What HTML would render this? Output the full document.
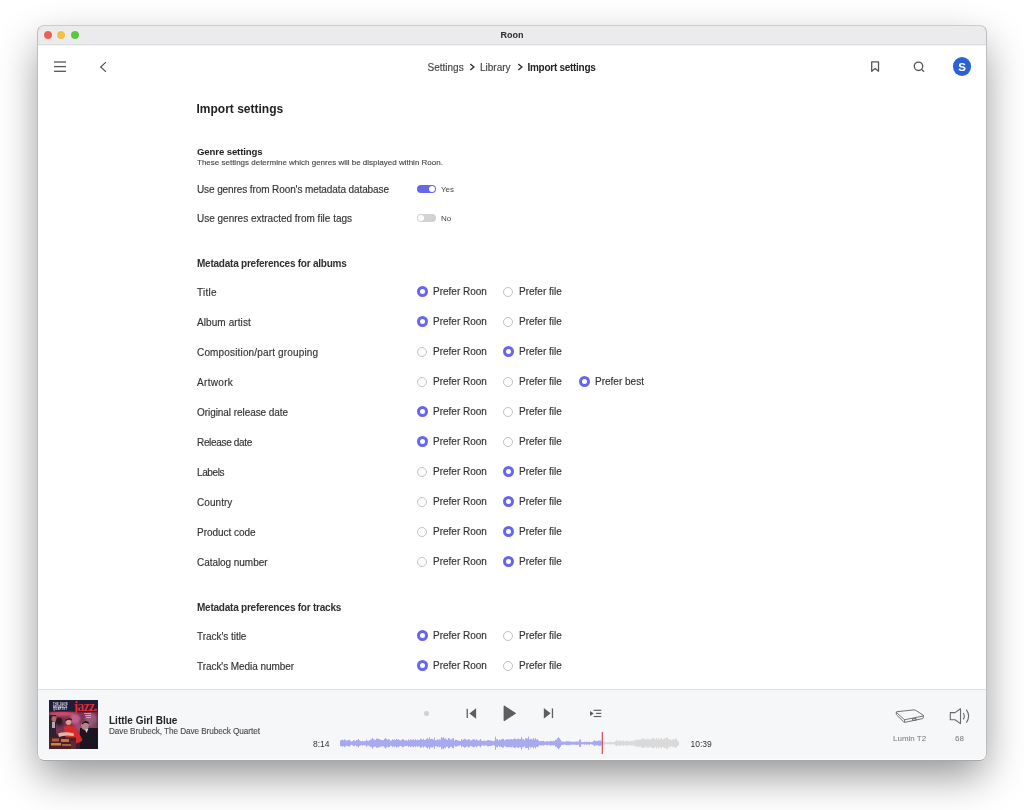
<!DOCTYPE html>
<html><head><meta charset="utf-8">
<style>
html,body{margin:0;padding:0;width:1024px;height:810px;background:#fff;overflow:hidden;position:relative;font-family:"Liberation Sans",sans-serif;color:#333;}
#root{position:absolute;left:0;top:0;width:1024px;height:810px;will-change:transform;}
.abs{position:absolute;white-space:nowrap;}
#win{position:absolute;left:37px;top:25px;width:950px;height:736px;border-radius:7px;background:#fff;box-shadow:0 17px 42px -3px rgba(0,0,0,0.44);}
#frame{position:absolute;left:37px;top:25px;width:950px;height:736px;border-radius:7px;border:1px solid #bdbdbd;border-top-color:#cdcdcd;border-bottom-color:#a9a9a9;box-sizing:border-box;z-index:5;pointer-events:none;}
#titlebar{position:absolute;left:37px;top:25px;width:950px;height:20px;background:#ebebed;border-bottom:1px solid #dedede;border-radius:7px 7px 0 0;box-sizing:border-box;box-shadow:0 1px 0 #f3f3f3;}
.tl{position:absolute;top:31.3px;width:8px;height:8px;border-radius:50%;box-shadow:0 0 0 0.6px rgba(255,255,255,0.7);}
#footer{position:absolute;left:37px;top:689px;width:950px;height:72px;background:#f6f7f8;border-top:1px solid #e2e2e2;border-radius:0 0 7px 7px;box-sizing:border-box;box-shadow:inset 0 -2px 0 #fdfdfd;}
.lbl{position:absolute;left:197px;font-size:10px;color:#333;white-space:nowrap;line-height:12px;-webkit-text-stroke:0.15px #333;}
.sec{position:absolute;left:197px;font-size:10px;font-weight:700;color:#2e2e2e;white-space:nowrap;line-height:12px;letter-spacing:-0.2px;}
.r{position:absolute;width:8px;height:8px;border-radius:50%;border:1.2px solid #c2c2c2;margin:1px 0 0 0.2px;}
.r.on{border:3px solid #6666ea;width:5px;height:5px;background:#fff;margin:0;}
.rt{position:absolute;font-size:10px;color:#333;white-space:nowrap;line-height:12px;-webkit-text-stroke:0.15px #333;}
</style></head>
<body>
<div id="root">
<div id="win"></div>
<div id="titlebar"></div>
<div class="tl" style="left:44px;background:#ec5f57;"></div>
<div class="tl" style="left:57px;background:#f4bd45;"></div>
<div class="tl" style="left:71px;background:#5bc544;"></div>
<div class="abs" style="left:38px;width:948px;text-align:center;top:30px;font-size:9px;font-weight:700;color:#2a2a2a;line-height:11px;">Roon</div>

<!-- header icons -->
<svg class="abs" style="left:50px;top:57px" width="20" height="20" viewBox="0 0 20 20">
  <g stroke="#555" stroke-width="1.3"><line x1="4" y1="5" x2="16" y2="5"/><line x1="4" y1="9.6" x2="16" y2="9.6"/><line x1="4" y1="14.3" x2="16" y2="14.3"/></g>
</svg>
<svg class="abs" style="left:93px;top:57px" width="20" height="20" viewBox="0 0 20 20">
  <polyline points="13,5.2 7.6,10 13,14.8" fill="none" stroke="#4a4a4a" stroke-width="1.1"/>
</svg>
<div class="abs" style="left:427.5px;top:62px;font-size:10px;line-height:12px;color:#444;-webkit-text-stroke:0.15px #444;">Settings</div>
<svg class="abs" style="left:466px;top:62px" width="12" height="10" viewBox="0 0 12 10"><polyline points="4.3,2 7.9,5 4.3,8" fill="none" stroke="#333" stroke-width="1.4"/></svg>
<div class="abs" style="left:480px;top:62px;font-size:10px;line-height:12px;color:#444;-webkit-text-stroke:0.15px #444;">Library</div>
<svg class="abs" style="left:514px;top:62px" width="12" height="10" viewBox="0 0 12 10"><polyline points="4.3,2 7.9,5 4.3,8" fill="none" stroke="#333" stroke-width="1.4"/></svg>
<div class="abs" style="left:527.5px;top:62px;font-size:10px;line-height:12px;color:#222;font-weight:700;letter-spacing:-0.28px;">Import settings</div>

<svg class="abs" style="left:865px;top:57px" width="20" height="20" viewBox="0 0 20 20">
  <path d="M6.7 4.9 H13.5 V14.2 L10.1 11.5 L6.7 14.2 Z" fill="none" stroke="#555" stroke-width="1.3" stroke-linejoin="round"/>
</svg>
<svg class="abs" style="left:908.5px;top:57px" width="20" height="20" viewBox="0 0 20 20">
  <circle cx="9.5" cy="9.3" r="4.2" fill="none" stroke="#555" stroke-width="1.3"/><line x1="12.6" y1="12.4" x2="15" y2="14.8" stroke="#555" stroke-width="1.3"/>
</svg>
<div class="abs" style="left:952.9px;top:57.2px;width:18.6px;height:18.6px;border-radius:50%;background:#2c62d6;"></div>
<div class="abs" style="left:952.9px;top:58.4px;width:18.6px;text-align:center;color:#fff;font-size:11.5px;line-height:18.6px;font-weight:700;">S</div>

<div class="abs" style="left:196.5px;top:102px;font-size:12px;font-weight:700;color:#222;line-height:14px;">Import settings</div>

<div class="abs" style="left:197px;top:145.6px;font-size:9.6px;font-weight:700;color:#222;line-height:11px;letter-spacing:-0.12px;">Genre settings</div>
<div class="abs" style="left:197px;top:157.5px;font-size:8px;color:#444;line-height:9px;-webkit-text-stroke:0.12px #444;">These settings determine which genres will be displayed within Roon.</div>

<div class="lbl" style="top:184px;letter-spacing:-0.1px">Use genres from Roon's metadata database</div>
<div class="abs" style="left:417px;top:185px;width:19px;height:8px;border-radius:4px;background:#6666ea;"></div>
<div class="abs" style="left:428.5px;top:186px;width:6px;height:6px;border-radius:50%;background:#fff;"></div>
<div class="abs" style="left:441px;top:185px;font-size:8px;line-height:10px;color:#444;">Yes</div>

<div class="lbl" style="top:213px">Use genres extracted from file tags</div>
<div class="abs" style="left:417px;top:214px;width:19px;height:8px;border-radius:4px;background:#d2d2d2;"></div>
<div class="abs" style="left:418px;top:215px;width:6px;height:6px;border-radius:50%;background:#fff;"></div>
<div class="abs" style="left:441px;top:214px;font-size:8px;line-height:10px;color:#444;">No</div>

<div class="sec" style="top:258px;letter-spacing:-0.23px">Metadata preferences for albums</div>
<div class="sec" style="top:602px;letter-spacing:-0.23px">Metadata preferences for tracks</div>

<div class="lbl" style="top:287px;letter-spacing:0.25px">Title</div>
<div class="r on" style="left:416.5px;top:286px"></div>
<div class="rt" style="left:433px;top:286px">Prefer Roon</div>
<div class="r" style="left:502.5px;top:286px"></div>
<div class="rt" style="left:519px;top:286px">Prefer file</div>
<div class="lbl" style="top:317px;letter-spacing:0.09px">Album artist</div>
<div class="r on" style="left:416.5px;top:316px"></div>
<div class="rt" style="left:433px;top:316px">Prefer Roon</div>
<div class="r" style="left:502.5px;top:316px"></div>
<div class="rt" style="left:519px;top:316px">Prefer file</div>
<div class="lbl" style="top:347px;letter-spacing:0.16px">Composition/part grouping</div>
<div class="r" style="left:416.5px;top:346px"></div>
<div class="rt" style="left:433px;top:346px">Prefer Roon</div>
<div class="r on" style="left:502.5px;top:346px"></div>
<div class="rt" style="left:519px;top:346px">Prefer file</div>
<div class="lbl" style="top:377px;letter-spacing:0.33px">Artwork</div>
<div class="r" style="left:416.5px;top:376px"></div>
<div class="rt" style="left:433px;top:376px">Prefer Roon</div>
<div class="r" style="left:502.5px;top:376px"></div>
<div class="rt" style="left:519px;top:376px">Prefer file</div>
<div class="r on" style="left:578.5px;top:376px"></div>
<div class="rt" style="left:595px;top:376px">Prefer best</div>
<div class="lbl" style="top:407px;letter-spacing:-0.06px">Original release date</div>
<div class="r on" style="left:416.5px;top:406px"></div>
<div class="rt" style="left:433px;top:406px">Prefer Roon</div>
<div class="r" style="left:502.5px;top:406px"></div>
<div class="rt" style="left:519px;top:406px">Prefer file</div>
<div class="lbl" style="top:437px;letter-spacing:-0.33px">Release date</div>
<div class="r on" style="left:416.5px;top:436px"></div>
<div class="rt" style="left:433px;top:436px">Prefer Roon</div>
<div class="r" style="left:502.5px;top:436px"></div>
<div class="rt" style="left:519px;top:436px">Prefer file</div>
<div class="lbl" style="top:467px;letter-spacing:-0.4px">Labels</div>
<div class="r" style="left:416.5px;top:466px"></div>
<div class="rt" style="left:433px;top:466px">Prefer Roon</div>
<div class="r on" style="left:502.5px;top:466px"></div>
<div class="rt" style="left:519px;top:466px">Prefer file</div>
<div class="lbl" style="top:497px;letter-spacing:0.06px">Country</div>
<div class="r" style="left:416.5px;top:496px"></div>
<div class="rt" style="left:433px;top:496px">Prefer Roon</div>
<div class="r on" style="left:502.5px;top:496px"></div>
<div class="rt" style="left:519px;top:496px">Prefer file</div>
<div class="lbl" style="top:527px;letter-spacing:-0.03px">Product code</div>
<div class="r" style="left:416.5px;top:526px"></div>
<div class="rt" style="left:433px;top:526px">Prefer Roon</div>
<div class="r on" style="left:502.5px;top:526px"></div>
<div class="rt" style="left:519px;top:526px">Prefer file</div>
<div class="lbl" style="top:557px;letter-spacing:-0.05px">Catalog number</div>
<div class="r" style="left:416.5px;top:556px"></div>
<div class="rt" style="left:433px;top:556px">Prefer Roon</div>
<div class="r on" style="left:502.5px;top:556px"></div>
<div class="rt" style="left:519px;top:556px">Prefer file</div>
<div class="lbl" style="top:631px;letter-spacing:-0.04px">Track's title</div>
<div class="r on" style="left:416.5px;top:630px"></div>
<div class="rt" style="left:433px;top:630px">Prefer Roon</div>
<div class="r" style="left:502.5px;top:630px"></div>
<div class="rt" style="left:519px;top:630px">Prefer file</div>
<div class="lbl" style="top:661px;letter-spacing:-0.06px">Track's Media number</div>
<div class="r on" style="left:416.5px;top:660px"></div>
<div class="rt" style="left:433px;top:660px">Prefer Roon</div>
<div class="r" style="left:502.5px;top:660px"></div>
<div class="rt" style="left:519px;top:660px">Prefer file</div>

<div id="footer"></div>
<svg class="abs" style="left:49px;top:700px" width="49" height="49" viewBox="0 0 49 49">
  <defs><filter id="bl" x="-20%" y="-20%" width="140%" height="140%"><feGaussianBlur stdDeviation="0.9"/></filter>
  <filter id="bl2" x="-20%" y="-20%" width="140%" height="140%"><feGaussianBlur stdDeviation="0.35"/></filter>
  <clipPath id="cp"><rect x="0" y="0" width="49" height="49"/></clipPath></defs>
  <g clip-path="url(#cp)">
  <rect x="0" y="0" width="49" height="49" fill="#3a1e30"/>
  <g filter="url(#bl)">
    <rect x="0" y="12" width="49" height="22" fill="#7a3454"/>
    <ellipse cx="13" cy="13.5" rx="13" ry="2.5" fill="#d84868"/>
    <ellipse cx="26" cy="19" rx="5" ry="5" fill="#c06090"/>
    <ellipse cx="42" cy="20" rx="6" ry="7" fill="#9a5a7a"/>
    <ellipse cx="29" cy="27" rx="4" ry="4" fill="#a04a78"/>
    <ellipse cx="11" cy="23" rx="4" ry="4" fill="#4a2838"/>
    <ellipse cx="46" cy="30" rx="3" ry="8" fill="#7a4a5a"/>
  </g>
  <g filter="url(#bl2)">
    <rect x="0" y="15" width="7" height="32" fill="#2e2030"/>
    <ellipse cx="5" cy="19" rx="2.5" ry="3" fill="#9a7068"/>
    <rect x="3" y="22" width="3" height="6" fill="#b8a8b0"/>
    <ellipse cx="10" cy="21" rx="3" ry="3.5" fill="#2a1a20"/>
    <rect x="31" y="28" width="18" height="21" fill="#1c1620"/>
    <ellipse cx="36" cy="25.5" rx="3.8" ry="4.5" fill="#b08488"/>
    <path d="M33 23 Q36 19.5 40 22.5 L39.5 24 Q36 21.5 33 24.5 Z" fill="#1a1418"/>
    <path d="M36 29.5 L39.5 28.5 L37.5 33 Z" fill="#e0d8d8"/>
    <path d="M15 27 Q21 24.5 27 27.5 L33.5 40 Q30 44.5 22 43 L16 36 Z" fill="#d82a2a"/>
    <ellipse cx="19.5" cy="21.5" rx="2.8" ry="3.4" fill="#dca090"/>
    <path d="M16 20 Q19 16.5 23 19 L22.5 21 Q19.5 18.5 16.5 21.5 Z" fill="#3a1a1a"/>
    <path d="M9 33.5 Q16 31 25 33.5 L24.5 36 Q15.5 34.5 10 37 Z" fill="#e4b8a8"/>
    <rect x="0" y="37.5" width="27" height="11.5" fill="#4a2420"/>
    <rect x="3" y="38.5" width="7" height="3" fill="#b85838"/>
    <rect x="12" y="39" width="8" height="3" fill="#c87048"/>
    <rect x="2" y="43" width="10" height="2.5" fill="#d08050"/>
    <rect x="13" y="44" width="9" height="2" fill="#a86040"/>
    <rect x="22" y="41" width="5" height="8" fill="#5a2a38"/>
  </g>
  <rect x="0" y="0" width="49" height="11.5" fill="#1e1c38"/>
  <g font-family="Liberation Sans" font-weight="700" font-size="2.6" fill="#dcdce4" letter-spacing="0.25"><text x="4" y="5">THE DAVE</text><text x="4" y="7.7">BRUBECK</text><text x="4" y="10.4">QUARTET</text></g>
  <g filter="url(#bl2)"><text x="24.8" y="11" font-family="Liberation Serif" font-size="14" font-weight="700" fill="#e42c30" letter-spacing="-0.9">jazz.</text></g>
  <g fill="#d8d0d8" opacity="0.7"><rect x="35" y="13" width="7" height="1"/><rect x="36" y="15" width="6" height="1"/><rect x="37" y="17" width="5" height="1"/></g>
  </g>
</svg>

<div class="abs" style="left:109px;top:715px;font-size:10px;font-weight:700;color:#222;line-height:12px;">Little Girl Blue</div>
<div class="abs" style="left:109px;top:726.9px;font-size:8.2px;letter-spacing:-0.06px;color:#4a4a4a;line-height:10px;-webkit-text-stroke:0.12px #4a4a4a;">Dave Brubeck, The Dave Brubeck Quartet</div>

<!-- controls -->
<div class="abs" style="left:423.8px;top:710.7px;width:5px;height:5px;border-radius:50%;background:#d0d0d0;"></div>
<svg class="abs" style="left:0;top:0" width="1024" height="810" viewBox="0 0 1024 810">
  <g fill="#5e5e5e">
    <rect x="466.6" y="708.8" width="1.3" height="9.2"/>
    <path d="M469.4 713.45 L476.1 708.2 V718.7 Z"/>
    <path d="M504 705.8 V720.9 L515.7 713.35 Z" stroke="#5e5e5e" stroke-width="0.8" stroke-linejoin="round"/>
    <path d="M543.8 707.9 V718.8 L550.6 713.35 Z"/>
    <rect x="551.8" y="708.5" width="1.3" height="9.6"/>
    <path d="M590 710.9 V716 L593.8 713.45 Z"/>
  </g>
  <g stroke="#5e5e5e" stroke-width="1.15">
    <line x1="593.6" y1="710.3" x2="601.3" y2="710.3"/>
    <line x1="596" y1="713.4" x2="601.3" y2="713.4"/>
    <line x1="593.6" y1="716.5" x2="601.3" y2="716.5"/>
  </g>
</svg>
<div class="abs" style="left:313px;top:739px;font-size:8.5px;color:#333;line-height:10px;">8:14</div>
<div class="abs" style="left:690.5px;top:739px;font-size:8.5px;color:#333;line-height:10px;">10:39</div>
<svg class="abs" style="left:0;top:0" width="1024" height="810" viewBox="0 0 1024 810"><g fill="#a9a9f2"><rect x="340" y="740.31" width="1.02" height="5.78"/><rect x="341" y="740.15" width="1.02" height="6.09"/><rect x="342" y="739.63" width="1.02" height="7.14"/><rect x="343" y="740.29" width="1.02" height="5.82"/><rect x="344" y="739.20" width="1.02" height="8.00"/><rect x="345" y="740.11" width="1.02" height="6.17"/><rect x="346" y="740.69" width="1.02" height="5.01"/><rect x="347" y="740.22" width="1.02" height="5.95"/><rect x="348" y="740.05" width="1.02" height="6.29"/><rect x="349" y="739.82" width="1.02" height="6.76"/><rect x="350" y="740.82" width="1.02" height="4.75"/><rect x="351" y="741.53" width="1.02" height="3.35"/><rect x="352" y="741.13" width="1.02" height="4.15"/><rect x="353" y="740.22" width="1.02" height="5.96"/><rect x="354" y="740.37" width="1.02" height="5.67"/><rect x="355" y="741.19" width="1.02" height="4.03"/><rect x="356" y="740.00" width="1.02" height="6.40"/><rect x="357" y="740.02" width="1.02" height="6.35"/><rect x="358" y="739.00" width="1.02" height="8.40"/><rect x="359" y="740.46" width="1.02" height="5.47"/><rect x="360" y="741.04" width="1.02" height="4.32"/><rect x="361" y="741.22" width="1.02" height="3.96"/><rect x="362" y="740.76" width="1.02" height="4.88"/><rect x="363" y="741.31" width="1.02" height="3.78"/><rect x="364" y="741.16" width="1.02" height="4.09"/><rect x="365" y="741.10" width="1.02" height="4.21"/><rect x="366" y="739.60" width="1.02" height="7.20"/><rect x="367" y="740.84" width="1.02" height="4.73"/><rect x="368" y="740.86" width="1.02" height="4.67"/><rect x="369" y="740.39" width="1.02" height="5.61"/><rect x="370" y="739.47" width="1.02" height="7.47"/><rect x="371" y="739.25" width="1.02" height="7.91"/><rect x="372" y="737.90" width="1.02" height="10.60"/><rect x="373" y="739.21" width="1.02" height="7.98"/><rect x="374" y="739.58" width="1.02" height="7.25"/><rect x="375" y="739.90" width="1.02" height="6.60"/><rect x="376" y="738.60" width="1.02" height="9.19"/><rect x="377" y="738.61" width="1.02" height="9.18"/><rect x="378" y="738.89" width="1.02" height="8.62"/><rect x="379" y="739.13" width="1.02" height="8.15"/><rect x="380" y="739.83" width="1.02" height="6.73"/><rect x="381" y="739.99" width="1.02" height="6.43"/><rect x="382" y="739.88" width="1.02" height="6.64"/><rect x="383" y="740.27" width="1.02" height="5.85"/><rect x="384" y="739.02" width="1.02" height="8.36"/><rect x="385" y="737.90" width="1.02" height="10.60"/><rect x="386" y="738.88" width="1.02" height="8.65"/><rect x="387" y="739.70" width="1.02" height="6.99"/><rect x="388" y="739.24" width="1.02" height="7.92"/><rect x="389" y="739.42" width="1.02" height="7.57"/><rect x="390" y="740.75" width="1.02" height="4.90"/><rect x="391" y="740.42" width="1.02" height="5.56"/><rect x="392" y="739.32" width="1.02" height="7.77"/><rect x="393" y="740.01" width="1.02" height="6.38"/><rect x="394" y="739.21" width="1.02" height="7.99"/><rect x="395" y="740.12" width="1.02" height="6.15"/><rect x="396" y="738.80" width="1.02" height="8.80"/><rect x="397" y="739.56" width="1.02" height="7.28"/><rect x="398" y="739.31" width="1.02" height="7.77"/><rect x="399" y="740.16" width="1.02" height="6.08"/><rect x="400" y="740.46" width="1.02" height="5.47"/><rect x="401" y="740.06" width="1.02" height="6.29"/><rect x="402" y="739.00" width="1.02" height="8.39"/><rect x="403" y="739.35" width="1.02" height="7.70"/><rect x="404" y="740.41" width="1.02" height="5.57"/><rect x="405" y="740.20" width="1.02" height="6.00"/><rect x="406" y="740.44" width="1.02" height="5.52"/><rect x="407" y="740.51" width="1.02" height="5.38"/><rect x="408" y="739.28" width="1.02" height="7.83"/><rect x="409" y="740.31" width="1.02" height="5.77"/><rect x="410" y="739.39" width="1.02" height="7.61"/><rect x="411" y="739.59" width="1.02" height="7.21"/><rect x="412" y="740.06" width="1.02" height="6.29"/><rect x="413" y="739.08" width="1.02" height="8.23"/><rect x="414" y="740.16" width="1.02" height="6.07"/><rect x="415" y="739.24" width="1.02" height="7.92"/><rect x="416" y="740.19" width="1.02" height="6.02"/><rect x="417" y="739.64" width="1.02" height="7.11"/><rect x="418" y="740.02" width="1.02" height="6.37"/><rect x="419" y="739.91" width="1.02" height="6.57"/><rect x="420" y="738.65" width="1.02" height="9.10"/><rect x="421" y="738.95" width="1.02" height="8.49"/><rect x="422" y="739.85" width="1.02" height="6.69"/><rect x="423" y="738.81" width="1.02" height="8.79"/><rect x="424" y="740.02" width="1.02" height="6.36"/><rect x="425" y="739.69" width="1.02" height="7.02"/><rect x="426" y="738.86" width="1.02" height="8.68"/><rect x="427" y="738.06" width="1.02" height="10.28"/><rect x="428" y="739.33" width="1.02" height="7.75"/><rect x="429" y="737.25" width="1.02" height="11.91"/><rect x="430" y="739.06" width="1.02" height="8.28"/><rect x="431" y="738.96" width="1.02" height="8.49"/><rect x="432" y="738.90" width="1.02" height="8.59"/><rect x="433" y="739.72" width="1.02" height="6.95"/><rect x="434" y="737.50" width="1.02" height="11.40"/><rect x="435" y="740.19" width="1.02" height="6.01"/><rect x="436" y="740.16" width="1.02" height="6.07"/><rect x="437" y="739.25" width="1.02" height="7.89"/><rect x="438" y="739.88" width="1.02" height="6.64"/><rect x="439" y="739.22" width="1.02" height="7.96"/><rect x="440" y="739.64" width="1.02" height="7.11"/><rect x="441" y="737.10" width="1.02" height="12.20"/><rect x="442" y="737.99" width="1.02" height="10.41"/><rect x="443" y="737.10" width="1.02" height="12.20"/><rect x="444" y="738.79" width="1.02" height="8.82"/><rect x="445" y="738.19" width="1.02" height="10.03"/><rect x="446" y="739.60" width="1.02" height="7.20"/><rect x="447" y="739.66" width="1.02" height="7.08"/><rect x="448" y="738.10" width="1.02" height="10.20"/><rect x="449" y="738.29" width="1.02" height="9.83"/><rect x="450" y="739.46" width="1.02" height="7.47"/><rect x="451" y="739.59" width="1.02" height="7.23"/><rect x="452" y="738.45" width="1.02" height="9.50"/><rect x="453" y="738.03" width="1.02" height="10.33"/><rect x="454" y="740.76" width="1.02" height="4.89"/><rect x="455" y="739.70" width="1.02" height="6.99"/><rect x="456" y="739.80" width="1.02" height="6.80"/><rect x="457" y="740.19" width="1.02" height="6.02"/><rect x="458" y="740.44" width="1.02" height="5.52"/><rect x="459" y="740.89" width="1.02" height="4.63"/><rect x="460" y="740.98" width="1.02" height="4.45"/><rect x="461" y="739.01" width="1.02" height="8.39"/><rect x="462" y="740.21" width="1.02" height="5.97"/><rect x="463" y="739.44" width="1.02" height="7.53"/><rect x="464" y="738.70" width="1.02" height="9.00"/><rect x="465" y="739.24" width="1.02" height="7.92"/><rect x="466" y="739.62" width="1.02" height="7.17"/><rect x="467" y="740.12" width="1.02" height="6.16"/><rect x="468" y="739.00" width="1.02" height="8.40"/><rect x="469" y="739.41" width="1.02" height="7.58"/><rect x="470" y="740.50" width="1.02" height="5.41"/><rect x="471" y="740.23" width="1.02" height="5.94"/><rect x="472" y="739.68" width="1.02" height="7.04"/><rect x="473" y="739.00" width="1.02" height="8.40"/><rect x="474" y="739.59" width="1.02" height="7.23"/><rect x="475" y="740.14" width="1.02" height="6.11"/><rect x="476" y="739.08" width="1.02" height="8.23"/><rect x="477" y="740.27" width="1.02" height="5.86"/><rect x="478" y="740.58" width="1.02" height="5.24"/><rect x="479" y="740.16" width="1.02" height="6.08"/><rect x="480" y="739.00" width="1.02" height="8.40"/><rect x="481" y="740.51" width="1.02" height="5.38"/><rect x="482" y="741.02" width="1.02" height="4.36"/><rect x="483" y="740.78" width="1.02" height="4.85"/><rect x="484" y="740.52" width="1.02" height="5.36"/><rect x="485" y="741.07" width="1.02" height="4.25"/><rect x="486" y="740.78" width="1.02" height="4.83"/><rect x="487" y="740.12" width="1.02" height="6.17"/><rect x="488" y="740.00" width="1.02" height="6.39"/><rect x="489" y="740.41" width="1.02" height="5.58"/><rect x="490" y="740.37" width="1.02" height="5.66"/><rect x="491" y="740.50" width="1.02" height="5.39"/><rect x="492" y="741.06" width="1.02" height="4.27"/><rect x="493" y="741.20" width="1.02" height="4.01"/><rect x="494" y="740.58" width="1.02" height="5.24"/><rect x="495" y="736.60" width="1.02" height="13.20"/><rect x="496" y="739.44" width="1.02" height="7.51"/><rect x="497" y="739.01" width="1.02" height="8.39"/><rect x="498" y="740.57" width="1.02" height="5.25"/><rect x="499" y="739.55" width="1.02" height="7.30"/><rect x="500" y="739.81" width="1.02" height="6.79"/><rect x="501" y="739.39" width="1.02" height="7.61"/><rect x="502" y="738.70" width="1.02" height="9.00"/><rect x="503" y="738.95" width="1.02" height="8.51"/><rect x="504" y="740.48" width="1.02" height="5.43"/><rect x="505" y="739.70" width="1.02" height="7.00"/><rect x="506" y="739.38" width="1.02" height="7.63"/><rect x="507" y="739.11" width="1.02" height="8.18"/><rect x="508" y="739.38" width="1.02" height="7.63"/><rect x="509" y="739.44" width="1.02" height="7.52"/><rect x="510" y="739.29" width="1.02" height="7.82"/><rect x="511" y="739.09" width="1.02" height="8.23"/><rect x="512" y="739.60" width="1.02" height="7.21"/><rect x="513" y="738.97" width="1.02" height="8.47"/><rect x="514" y="738.56" width="1.02" height="9.29"/><rect x="515" y="738.61" width="1.02" height="9.17"/><rect x="516" y="739.47" width="1.02" height="7.46"/><rect x="517" y="738.77" width="1.02" height="8.87"/><rect x="518" y="738.63" width="1.02" height="9.14"/><rect x="519" y="739.18" width="1.02" height="8.05"/><rect x="520" y="739.08" width="1.02" height="8.24"/><rect x="521" y="736.80" width="1.02" height="12.80"/><rect x="522" y="739.16" width="1.02" height="8.08"/><rect x="523" y="739.11" width="1.02" height="8.18"/><rect x="524" y="740.11" width="1.02" height="6.18"/><rect x="525" y="738.20" width="1.02" height="10.00"/><rect x="526" y="738.38" width="1.02" height="9.63"/><rect x="527" y="738.60" width="1.02" height="9.21"/><rect x="528" y="736.60" width="1.02" height="13.20"/><rect x="529" y="739.53" width="1.02" height="7.35"/><rect x="530" y="738.87" width="1.02" height="8.66"/><rect x="531" y="739.16" width="1.02" height="8.08"/><rect x="532" y="739.43" width="1.02" height="7.55"/><rect x="533" y="738.03" width="1.02" height="10.34"/><rect x="534" y="739.61" width="1.02" height="7.18"/><rect x="535" y="738.08" width="1.02" height="10.24"/><rect x="536" y="739.63" width="1.02" height="7.13"/><rect x="537" y="739.32" width="1.02" height="7.76"/><rect x="538" y="740.27" width="1.02" height="5.87"/><rect x="539" y="741.27" width="1.02" height="3.86"/><rect x="540" y="740.97" width="1.02" height="4.46"/><rect x="541" y="741.17" width="1.02" height="4.06"/><rect x="542" y="741.05" width="1.02" height="4.30"/><rect x="543" y="740.75" width="1.02" height="4.90"/><rect x="544" y="741.41" width="1.02" height="3.59"/><rect x="545" y="741.65" width="1.02" height="3.10"/><rect x="546" y="741.36" width="1.02" height="3.68"/><rect x="547" y="740.99" width="1.02" height="4.42"/><rect x="548" y="741.46" width="1.02" height="3.48"/><rect x="549" y="741.49" width="1.02" height="3.42"/><rect x="550" y="740.76" width="1.02" height="4.87"/><rect x="551" y="741.01" width="1.02" height="4.39"/><rect x="552" y="741.22" width="1.02" height="3.96"/><rect x="553" y="740.78" width="1.02" height="4.85"/><rect x="554" y="741.17" width="1.02" height="4.07"/><rect x="555" y="739.73" width="1.02" height="6.93"/><rect x="556" y="739.62" width="1.02" height="7.16"/><rect x="557" y="738.19" width="1.02" height="10.01"/><rect x="558" y="737.25" width="1.02" height="11.90"/><rect x="559" y="738.31" width="1.02" height="9.78"/><rect x="560" y="739.69" width="1.02" height="7.02"/><rect x="561" y="741.45" width="1.02" height="3.49"/><rect x="562" y="741.47" width="1.02" height="3.46"/><rect x="563" y="741.68" width="1.02" height="3.03"/><rect x="564" y="741.83" width="1.02" height="2.74"/><rect x="565" y="741.54" width="1.02" height="3.32"/><rect x="566" y="741.26" width="1.02" height="3.88"/><rect x="567" y="741.25" width="1.02" height="3.89"/><rect x="568" y="741.36" width="1.02" height="3.67"/><rect x="569" y="741.17" width="1.02" height="4.06"/><rect x="570" y="741.72" width="1.02" height="2.97"/><rect x="571" y="741.80" width="1.02" height="2.79"/><rect x="572" y="741.57" width="1.02" height="3.25"/><rect x="573" y="741.72" width="1.02" height="2.97"/><rect x="574" y="741.77" width="1.02" height="2.87"/><rect x="575" y="741.60" width="1.02" height="3.19"/><rect x="576" y="741.43" width="1.02" height="3.53"/><rect x="577" y="741.54" width="1.02" height="3.32"/><rect x="578" y="741.68" width="1.02" height="3.03"/><rect x="579" y="739.64" width="1.02" height="7.11"/><rect x="580" y="739.43" width="1.02" height="7.54"/><rect x="581" y="741.84" width="1.02" height="2.71"/><rect x="582" y="742.10" width="1.02" height="2.20"/><rect x="583" y="742.13" width="1.02" height="2.14"/><rect x="584" y="741.56" width="1.02" height="3.28"/><rect x="585" y="742.12" width="1.02" height="2.16"/><rect x="586" y="741.67" width="1.02" height="3.06"/><rect x="587" y="741.76" width="1.02" height="2.87"/><rect x="588" y="741.94" width="1.02" height="2.52"/><rect x="589" y="741.62" width="1.02" height="3.17"/><rect x="590" y="742.14" width="1.02" height="2.13"/><rect x="591" y="742.06" width="1.02" height="2.28"/><rect x="592" y="741.84" width="1.02" height="2.71"/><rect x="593" y="741.21" width="1.02" height="3.98"/><rect x="594" y="740.19" width="1.02" height="6.01"/><rect x="595" y="740.94" width="1.02" height="4.52"/><rect x="596" y="741.06" width="1.02" height="4.28"/><rect x="597" y="741.18" width="1.02" height="4.04"/><rect x="598" y="740.45" width="1.02" height="5.51"/><rect x="599" y="740.68" width="1.02" height="5.05"/><rect x="600" y="740.45" width="1.02" height="5.51"/><rect x="601" y="741.71" width="1.02" height="2.98"/></g><g fill="#dadada"><rect x="602" y="741.61" width="1.02" height="3.19"/><rect x="603" y="741.73" width="1.02" height="2.94"/><rect x="604" y="741.89" width="1.02" height="2.62"/><rect x="605" y="742.17" width="1.02" height="2.05"/><rect x="606" y="742.01" width="1.02" height="2.38"/><rect x="607" y="742.19" width="1.02" height="2.03"/><rect x="608" y="742.28" width="1.02" height="1.83"/><rect x="609" y="742.01" width="1.02" height="2.37"/><rect x="610" y="741.87" width="1.02" height="2.66"/><rect x="611" y="742.19" width="1.02" height="2.03"/><rect x="612" y="742.13" width="1.02" height="2.14"/><rect x="613" y="742.09" width="1.02" height="2.22"/><rect x="614" y="741.88" width="1.02" height="2.64"/><rect x="615" y="740.96" width="1.02" height="4.48"/><rect x="616" y="740.20" width="1.02" height="6.00"/><rect x="617" y="740.70" width="1.02" height="4.99"/><rect x="618" y="741.10" width="1.02" height="4.21"/><rect x="619" y="740.66" width="1.02" height="5.07"/><rect x="620" y="740.54" width="1.02" height="5.32"/><rect x="621" y="741.43" width="1.02" height="3.55"/><rect x="622" y="740.51" width="1.02" height="5.37"/><rect x="623" y="740.74" width="1.02" height="4.92"/><rect x="624" y="741.38" width="1.02" height="3.64"/><rect x="625" y="741.03" width="1.02" height="4.34"/><rect x="626" y="740.84" width="1.02" height="4.71"/><rect x="627" y="740.54" width="1.02" height="5.33"/><rect x="628" y="741.37" width="1.02" height="3.65"/><rect x="629" y="741.19" width="1.02" height="4.02"/><rect x="630" y="740.90" width="1.02" height="4.60"/><rect x="631" y="740.98" width="1.02" height="4.45"/><rect x="632" y="740.84" width="1.02" height="4.72"/><rect x="633" y="741.29" width="1.02" height="3.82"/><rect x="634" y="739.82" width="1.02" height="6.75"/><rect x="635" y="740.51" width="1.02" height="5.39"/><rect x="636" y="739.72" width="1.02" height="6.97"/><rect x="637" y="739.57" width="1.02" height="7.26"/><rect x="638" y="739.84" width="1.02" height="6.72"/><rect x="639" y="739.72" width="1.02" height="6.96"/><rect x="640" y="739.94" width="1.02" height="6.53"/><rect x="641" y="738.67" width="1.02" height="9.06"/><rect x="642" y="738.52" width="1.02" height="9.36"/><rect x="643" y="738.53" width="1.02" height="9.35"/><rect x="644" y="739.34" width="1.02" height="7.72"/><rect x="645" y="738.87" width="1.02" height="8.66"/><rect x="646" y="739.74" width="1.02" height="6.92"/><rect x="647" y="738.65" width="1.02" height="9.10"/><rect x="648" y="738.75" width="1.02" height="8.90"/><rect x="649" y="739.69" width="1.02" height="7.03"/><rect x="650" y="739.51" width="1.02" height="7.37"/><rect x="651" y="738.71" width="1.02" height="8.98"/><rect x="652" y="738.46" width="1.02" height="9.48"/><rect x="653" y="737.97" width="1.02" height="10.46"/><rect x="654" y="738.60" width="1.02" height="9.19"/><rect x="655" y="739.64" width="1.02" height="7.13"/><rect x="656" y="737.88" width="1.02" height="10.64"/><rect x="657" y="739.56" width="1.02" height="7.29"/><rect x="658" y="737.90" width="1.02" height="10.60"/><rect x="659" y="739.31" width="1.02" height="7.78"/><rect x="660" y="738.95" width="1.02" height="8.51"/><rect x="661" y="737.93" width="1.02" height="10.55"/><rect x="662" y="739.38" width="1.02" height="7.63"/><rect x="663" y="739.37" width="1.02" height="7.67"/><rect x="664" y="738.54" width="1.02" height="9.32"/><rect x="665" y="738.07" width="1.02" height="10.26"/><rect x="666" y="737.81" width="1.02" height="10.78"/><rect x="667" y="737.00" width="1.02" height="12.40"/><rect x="668" y="739.04" width="1.02" height="8.33"/><rect x="669" y="739.79" width="1.02" height="6.82"/><rect x="670" y="739.03" width="1.02" height="8.34"/><rect x="671" y="740.47" width="1.02" height="5.47"/><rect x="672" y="739.60" width="1.02" height="7.20"/><rect x="673" y="738.98" width="1.02" height="8.43"/><rect x="674" y="739.46" width="1.02" height="7.48"/><rect x="675" y="738.57" width="1.02" height="9.25"/><rect x="676" y="738.76" width="1.02" height="8.89"/><rect x="677" y="740.39" width="1.02" height="5.61"/><rect x="678" y="741.04" width="1.02" height="4.32"/></g><rect x="601.7" y="732" width="1.2" height="22" fill="#d8455a"/></svg>

<!-- device -->
<svg class="abs" style="left:890px;top:704px" width="40" height="24" viewBox="890 704 40 24">
  <g fill="none" stroke="#6a6a6a" stroke-width="0.95" stroke-linejoin="round">
    <path d="M896.3 712.3 Q896 711.9 896.8 711.7 L913.8 709.9 Q915 709.8 915.8 710.4 L923.4 715.3 Q923.8 715.8 923.2 716 L905.2 719.6 Q904.5 719.7 904 719.3 Z"/>
    <path d="M896.2 712.4 L896.4 714.6 Q896.6 715.1 897.2 715.5 L903.8 722 Q904.3 722.4 905 722.3 L922.6 718.6 Q923.3 718.4 923.3 717.8 L923.4 715.6"/>
    <path d="M904.6 719.6 V722.2"/>
    <path d="M912.6 718.6 h3.6 v1.7 h-3.6z"/>
  </g>
</svg>
<div class="abs" style="left:893px;top:734px;font-size:8px;color:#777;line-height:10px;">Lumin T2</div>
<svg class="abs" style="left:945px;top:704px" width="30" height="24" viewBox="945 704 30 24">
  <g fill="none" stroke="#6a6a6a" stroke-width="1.1" stroke-linejoin="round">
    <path d="M950.3 712.6 H955 L960.5 708.8 V723.6 L955 719.8 H950.3 Z"/>
    <path d="M963.2 713 Q965.4 716.2 963.2 719.4"/>
    <path d="M966.3 709.6 Q971 716.2 966.3 722.8"/>
  </g>
</svg>
<div class="abs" style="left:955px;top:734px;font-size:8px;color:#777;line-height:10px;">68</div>
<div id="frame"></div>
</div>
</body></html>
